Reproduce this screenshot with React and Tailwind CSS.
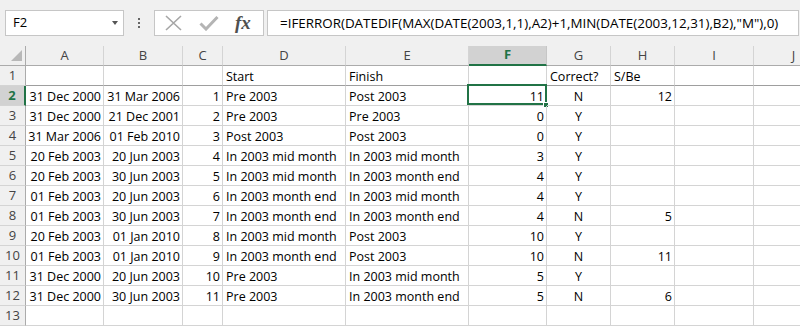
import React from 'react';

const colLetters = ['A', 'B', 'C', 'D', 'E', 'F', 'G', 'H', 'I', 'J'];

const data = [
    ['31 Dec 2000', '31 Mar 2006', '1', 'Pre 2003', 'Post 2003', '11', 'N', '12'],
    ['31 Dec 2000', '21 Dec 2001', '2', 'Pre 2003', 'Pre 2003', '0', 'Y', ''],
    ['31 Mar 2006', '01 Feb 2010', '3', 'Post 2003', 'Post 2003', '0', 'Y', ''],
    ['20 Feb 2003', '20 Jun 2003', '4', 'In 2003 mid month', 'In 2003 mid month', '3', 'Y', ''],
    ['20 Feb 2003', '30 Jun 2003', '5', 'In 2003 mid month', 'In 2003 month end', '4', 'Y', ''],
    ['01 Feb 2003', '20 Jun 2003', '6', 'In 2003 month end', 'In 2003 mid month', '4', 'Y', ''],
    ['01 Feb 2003', '30 Jun 2003', '7', 'In 2003 month end', 'In 2003 month end', '4', 'N', '5'],
    ['20 Feb 2003', '01 Jan 2010', '8', 'In 2003 mid month', 'Post 2003', '10', 'Y', ''],
    ['01 Feb 2003', '01 Jan 2010', '9', 'In 2003 month end', 'Post 2003', '10', 'N', '11'],
    ['31 Dec 2000', '20 Jun 2003', '10', 'Pre 2003', 'In 2003 mid month', '5', 'Y', ''],
    ['31 Dec 2000', '30 Jun 2003', '11', 'Pre 2003', 'In 2003 month end', '5', 'N', '6'],
];

// alignment of data columns A..H
const align = ['justify-end pr-[2px]', 'justify-end pr-[2px]', 'justify-end pr-[2px]', 'justify-start pl-[3px]', 'justify-start pl-[3px]', 'justify-end pr-[2px]', 'justify-center', 'justify-end pr-[2px]'];

const Cell = ({ children, className = '', line = 'border-[#d4d4d4]' }) => (
    <div className={`relative flex items-end leading-[16px] whitespace-nowrap overflow-visible border-r border-b ${line} ${className}`}>
        {children}
    </div>
);

const FormulaBar = () => (
    <div className="h-[46px] bg-[#f0f0f0] flex items-start pt-[10px] pl-[5px]">
        {/* Name box */}
        <div className="w-[119px] h-[26px] bg-white border border-[#c6c6c6] flex items-center justify-between pl-[7px] pr-[5px] text-[13px] text-black">
            <span>F2</span>
            <span className="w-0 h-0 border-l-[3px] border-r-[3px] border-t-[4px] border-l-transparent border-r-transparent border-t-[#555]"></span>
        </div>
        {/* grip dots */}
        <div className="w-[30px] h-[26px] flex flex-col items-center justify-center gap-[2px]">
            <span className="w-[2px] h-[2px] bg-[#666]"></span>
            <span className="w-[2px] h-[2px] bg-[#666]"></span>
            <span className="w-[2px] h-[2px] bg-[#666]"></span>
        </div>
        {/* cancel / enter / fx */}
        <div className="w-[110px] h-[26px] bg-white border border-[#c6c6c6] flex items-center pl-[9px] gap-[16px]">
            <svg width="19" height="16" viewBox="0 0 19 16">
                <path d="M2 1 L17 15 M17 1 L2 15" stroke="#a6a6a6" strokeWidth="1.6" fill="none" />
            </svg>
            <svg width="20" height="16" viewBox="0 0 20 16">
                <path d="M1.5 8.5 L7 14 L18.5 2" stroke="#b4b4b4" strokeWidth="3" fill="none" />
            </svg>
            <span className="font-['Liberation_Serif',serif] italic font-bold text-[19px] leading-none text-[#505050] -mt-[2px]">fx</span>
        </div>
        {/* formula */}
        <div className="ml-[3px] w-[532px] h-[26px] bg-white border border-[#c6c6c6] flex items-center pl-[12px] text-[13.4px] text-black whitespace-nowrap overflow-hidden">
            =IFERROR(DATEDIF(MAX(DATE(2003,1,1),A2)+1,MIN(DATE(2003,12,31),B2),"M"),0)
        </div>
    </div>
);

export default function App() {
    return (
        <div className="w-[800px] h-[326px] overflow-hidden bg-white font-['Open_Sans',sans-serif] text-[12.5px] text-black">
            <FormulaBar />
            <div className="grid grid-cols-[26px_78px_79px_40px_123px_123px_78px_64px_64px_79px_80px] auto-rows-[20px]">
                {/* column header row */}
                <div className="relative bg-[#f0f0f0] border-r border-b border-[#ababab]">
                    <svg className="absolute left-[11px] top-[4px]" width="12" height="12" viewBox="0 0 12 12">
                        <path d="M11 0 L11 11 L0 11 Z" fill="#b8b8b8" />
                    </svg>
                </div>
                {colLetters.map((l) =>
                    l === 'F' ? (
                        <div key={l} className="bg-[#d2d2d2] border-r border-[#c6c6c6] border-b-2 border-b-[#217346] flex items-center justify-center font-bold text-[#217346] text-[13px]">
                            {l}
                        </div>
                    ) : (
                        <div key={l} className="bg-[#f0f0f0] border-r border-[#d4d4d4] border-b border-b-[#ababab] flex items-center justify-center text-[#444] text-[13px]">
                            {l}
                        </div>
                    )
                )}

                {/* row 1 */}
                <div className="bg-[#f0f0f0] border-r border-[#ababab] border-b border-b-[#d4d4d4] flex items-center justify-center text-[#444] text-[13px]">1</div>
                {['', '', '', 'Start', 'Finish', '', 'Correct?', 'S/Be', '', ''].map((v, i) => (
                    <Cell key={i} className="justify-start pl-[3px] border-b-[#9e9e9e]">{v}</Cell>
                ))}

                {data.map((row, r) => {
                    const n = r + 2;
                    const active = n === 2;
                    return (
                        <React.Fragment key={n}>
                            <div
                                className={
                                    active
                                        ? 'bg-[#d2d2d2] border-r-2 border-r-[#217346] border-b border-b-[#d4d4d4] flex items-center justify-center font-bold text-[#217346] text-[13px]'
                                        : 'bg-[#f0f0f0] border-r border-[#ababab] border-b border-b-[#d4d4d4] flex items-center justify-center text-[#444] text-[13px]'
                                }
                            >
                                {n}
                            </div>
                            {row.map((v, i) => (
                                <Cell key={i} className={align[i]}>
                                    {v}
                                    {active && i === 5 && (
                                        <>
                                            <span className="absolute left-[-2px] top-[-2px] right-[-1px] bottom-0 border-2 border-[#217346]"></span>
                                            <span className="absolute right-[-3px] bottom-[-3px] w-[6px] h-[6px] bg-[#217346] border border-white"></span>
                                        </>
                                    )}
                                </Cell>
                            ))}
                            <Cell />
                            <Cell />
                        </React.Fragment>
                    );
                })}

                {/* row 13 */}
                <div className="bg-[#f0f0f0] border-r border-[#ababab] border-b border-b-[#d4d4d4] flex items-center justify-center text-[#444] text-[13px]">13</div>
                {colLetters.map((l) => (
                    <Cell key={l} />
                ))}
            </div>
        </div>
    );
}
